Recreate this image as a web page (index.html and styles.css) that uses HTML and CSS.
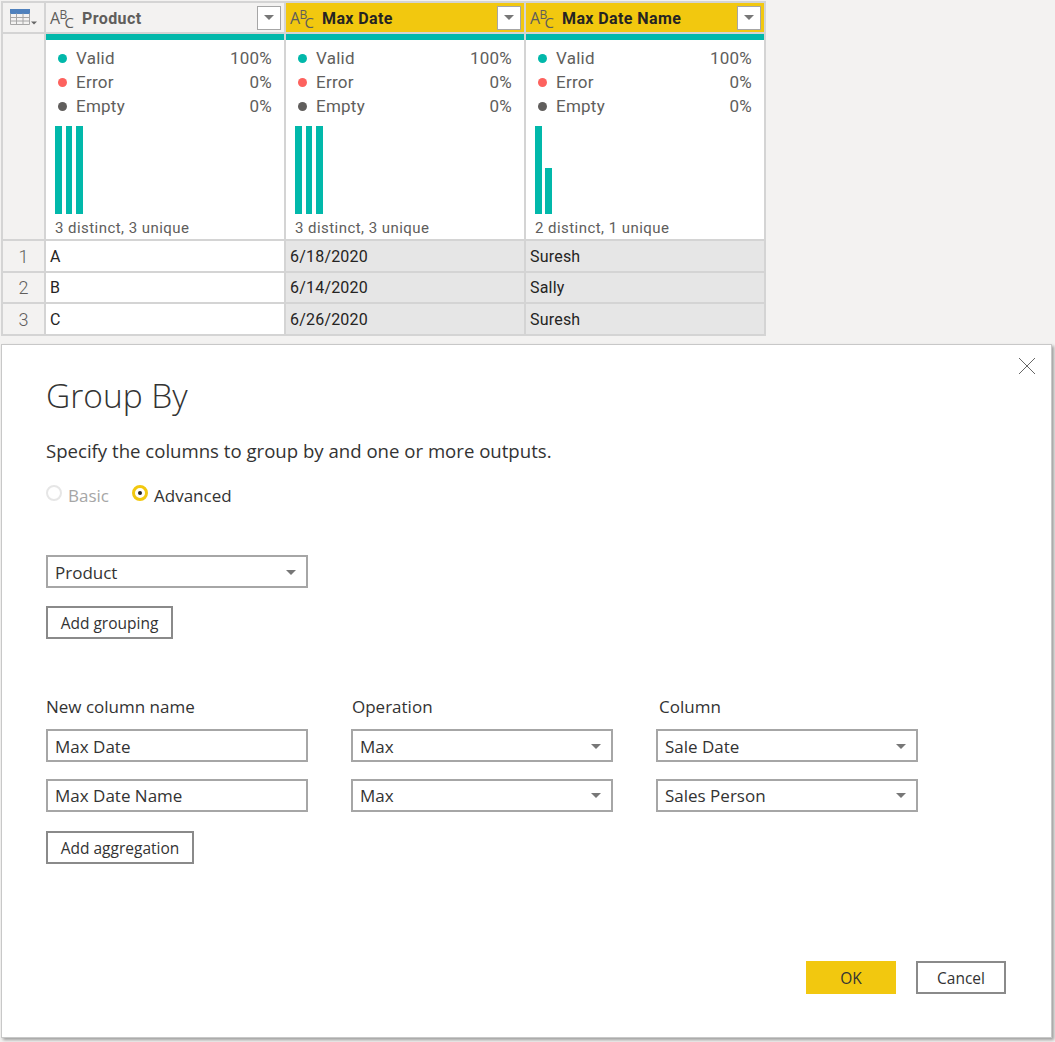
FILE: index.html
```html
<!DOCTYPE html>
<html lang="en">
<head>
<meta charset="utf-8">
<title>Group By</title>
<link rel="stylesheet" href="styles.css">
</head>
<body>
<div class="table">
  <div class="corner">
    <svg class="table-icon" width="28" height="18" viewBox="0 0 28 18"><rect x="0.5" y="0.5" width="19" height="4" fill="#4f81bd" stroke="#4f81bd"/><path d="M0.5 4.5V15.5H19.5V4.5M0.5 8.5H19.5M0.5 12H19.5M6.5 4.5V15.5M13 4.5V15.5" fill="none" stroke="#a6a6a6"/><path d="M21 12.500H27L24 15.500Z" fill="#666"/></svg>
  </div>
  <div class="head"><span class="abc">A<sup>B</sup><sub>C</sub></span><span class="head-name">Product</span><span class="filter"><i class="arrow"></i></span></div>
  <div class="head head-on"><span class="abc">A<sup>B</sup><sub>C</sub></span><span class="head-name">Max Date</span><span class="filter"><i class="arrow"></i></span></div>
  <div class="head head-on"><span class="abc">A<sup>B</sup><sub>C</sub></span><span class="head-name">Max Date Name</span><span class="filter"><i class="arrow"></i></span></div>

  <div class="corner"></div>
  <div class="profile">
    <div class="stat"><i class="dot teal"></i><span class="stat-name">Valid</span><span>100%</span></div>
    <div class="stat"><i class="dot red"></i><span class="stat-name">Error</span><span>0%</span></div>
    <div class="stat"><i class="dot grey"></i><span class="stat-name">Empty</span><span>0%</span></div>
    <div class="bars"><i class="bar"></i><i class="bar"></i><i class="bar"></i></div>
    <div class="distinct">3 distinct, 3 unique</div>
  </div>
  <div class="profile">
    <div class="stat"><i class="dot teal"></i><span class="stat-name">Valid</span><span>100%</span></div>
    <div class="stat"><i class="dot red"></i><span class="stat-name">Error</span><span>0%</span></div>
    <div class="stat"><i class="dot grey"></i><span class="stat-name">Empty</span><span>0%</span></div>
    <div class="bars"><i class="bar"></i><i class="bar"></i><i class="bar"></i></div>
    <div class="distinct">3 distinct, 3 unique</div>
  </div>
  <div class="profile">
    <div class="stat"><i class="dot teal"></i><span class="stat-name">Valid</span><span>100%</span></div>
    <div class="stat"><i class="dot red"></i><span class="stat-name">Error</span><span>0%</span></div>
    <div class="stat"><i class="dot grey"></i><span class="stat-name">Empty</span><span>0%</span></div>
    <div class="bars"><i class="bar"></i><i class="bar bar-half"></i></div>
    <div class="distinct">2 distinct, 1 unique</div>
  </div>

  <div class="num">1</div><div class="cell">A</div><div class="cell cell-on">6/18/2020</div><div class="cell cell-on">Suresh</div>
  <div class="num">2</div><div class="cell">B</div><div class="cell cell-on">6/14/2020</div><div class="cell cell-on">Sally</div>
  <div class="num">3</div><div class="cell">C</div><div class="cell cell-on">6/26/2020</div><div class="cell cell-on">Suresh</div>
</div>

<div class="dialog">
  <svg class="close" width="18" height="18" viewBox="0 0 18 18"><path d="M1 1L17 17M17 1L1 17" stroke="#666" stroke-width="1" fill="none"/></svg>
  <h1 class="title">Group By</h1>
  <p class="desc">Specify the columns to group by and one or more outputs.</p>
  <div class="radios">
    <label class="radio radio-off"><i class="radio-mark"></i>Basic</label>
    <label class="radio radio-on"><i class="radio-mark"></i>Advanced</label>
  </div>
  <div class="select select-group">Product<i class="arrow"></i></div>
  <div class="btn btn-grouping">Add grouping</div>
  <div class="agg-grid agg-head">
    <div>New column name</div><div class="agg-op">Operation</div><div class="agg-col">Column</div>
  </div>
  <div class="agg-grid agg-row">
    <div class="select">Max Date</div>
    <div class="select">Max<i class="arrow"></i></div>
    <div class="select">Sale Date<i class="arrow"></i></div>
  </div>
  <div class="agg-grid agg-row agg-row-2">
    <div class="select">Max Date Name</div>
    <div class="select">Max<i class="arrow"></i></div>
    <div class="select">Sales Person<i class="arrow"></i></div>
  </div>
  <div class="btn btn-agg">Add aggregation</div>
  <div class="footer">
    <div class="btn btn-ok">OK</div>
    <div class="btn btn-cancel">Cancel</div>
  </div>
</div>
</body>
</html>
```
FILE: styles.css
```css
* { box-sizing: border-box; }
html, body { margin: 0; height: 100%; overflow: hidden; }
body { background: #f3f2f1; font-family: "Open Sans", "Liberation Sans", sans-serif; color: #333; }

.table {
  display: grid;
  grid-template-columns: 41px 238px 238px 238px;
  grid-template-rows: 29px 205px 30px 29px 30px;
  gap: 2px;
  padding: 2px;
  width: 765px;
  margin: 1px 0 0 1px;
  background: #d4d4d4;
  font-family: Roboto, "Noto Sans", sans-serif;
}
.corner { background: #f3f2f1; padding: 6px 0 0 7px; }
.table-icon { display: block; }
.head {
  background: #f3f2f1;
  display: flex;
  align-items: center;
  padding: 0 3px 0 4px;
  color: #605e5c;
}
.head-on { background: #f2c80f; color: #252423; }
.abc {
  font-family: "Open Sans", sans-serif;
  font-size: 16px;
  color: #605e5c;
  width: 32px;
  line-height: 20px;
  white-space: nowrap;
  letter-spacing: -0.7px;
}
.abc sup { font-size: 12px; line-height: 0; vertical-align: 5px; }
.abc sub { font-size: 15px; line-height: 0; vertical-align: -4px; margin-left: -2px; }
.head-name { flex: 1; font-size: 16px; font-weight: 700; letter-spacing: 0.4px; padding-top: 2px; }
.filter {
  width: 24px;
  height: 24px;
  background: #fff;
  border: 1px solid #a6a6a6;
  display: flex;
  align-items: center;
  justify-content: center;
}
.arrow {
  display: block;
  width: 0;
  height: 0;
  border-left: 5px solid transparent;
  border-right: 5px solid transparent;
  border-top: 5px solid #777;
}
.profile {
  background: #fff;
  border-top: 6px solid #01b8aa;
  padding: 6px 12px 0 9px;
  color: #605e5c;
}
.stat {
  display: flex;
  align-items: center;
  height: 24px;
  font-size: 17px;
  letter-spacing: 0.25px;
}
.dot { width: 9px; height: 9px; border-radius: 50%; margin: 0 9px 0 3px; }
.teal { background: #01b8aa; }
.red { background: #fd625e; }
.grey { background: #605e5c; }
.stat-name { flex: 1; }
.bars { display: flex; align-items: flex-end; gap: 4px; height: 88px; margin-top: 8px; }
.bar { width: 6.5px; height: 88px; background: #01b8aa; }
.bar-half { height: 46px; margin-left: -0.5px; }
.distinct { font-size: 15px; line-height: 18px; margin-top: 5px; letter-spacing: 0.45px; }
.num {
  background: #f3f2f1;
  color: #605e5c;
  font-size: 18px;
  display: flex;
  align-items: center;
  justify-content: center;
  font-weight: 300;
}
.cell {
  background: #fff;
  color: #252423;
  font-size: 16px;
  letter-spacing: 0.2px;
  display: flex;
  align-items: center;
  padding: 0 0 0 4px;
}
.cell-on { background: #e6e6e6; }

.dialog {
  position: relative;
  width: 1051px;
  height: 694px;
  margin: 8px 0 0 1px;
  background: #fff;
  border: 1px solid #c8c8c8;
  box-shadow: 2px 2px 3px rgba(0, 0, 0, 0.35);
  padding: 28px 45px 0 44px;
  font-size: 17px;
  color: #333;
}
.close { position: absolute; top: 12px; right: 15px; }
.title { margin: 0; font-size: 33.5px; font-weight: 300; line-height: 44px; color: #333; }
.desc { margin: 22px 0 0; font-size: 18.6px; line-height: 24px; }
.radios { display: flex; gap: 23px; margin-top: 20px; height: 24px; }
.radio { display: flex; align-items: center; gap: 6px; font-size: 17px; }
.radio-off { color: #a6a6a6; width: 63px; }
.radio-mark { width: 16px; height: 16px; border-radius: 50%; display: block; margin-top: -4px; }
.radio-off .radio-mark { border: 2px solid #e6e6e6; }
.radio-on .radio-mark { border: 3px solid #f2c80f; background: #fff; position: relative; }
.radio-on .radio-mark::after {
  content: "";
  position: absolute;
  top: 3px;
  left: 3px;
  width: 4px;
  height: 4px;
  border-radius: 50%;
  background: #252423;
}
.select {
  width: 262px;
  height: 33px;
  border: 2px solid #a6a6a6;
  background: #fff;
  display: flex;
  align-items: center;
  justify-content: space-between;
  padding: 1px 10px 0 7px;
  font-size: 17px;
  color: #333;
}
.select-group { margin-top: 48px; }
.btn {
  height: 33px;
  border: 2px solid #8a8a8a;
  display: flex;
  align-items: center;
  justify-content: center;
  font-size: 15.5px;
  color: #333;
}
.btn-grouping { width: 127px; margin-top: 18px; }
.agg-grid { display: grid; grid-template-columns: 262px 262px 262px; column-gap: 43px; }
.agg-head { margin-top: 57px; line-height: 22px; font-size: 17px; }
.agg-op { padding-left: 1px; }
.agg-col { padding-left: 3px; }
.agg-row { margin-top: 11px; }
.agg-row-2 { margin-top: 17px; }
.agg-row-2 .select { padding-top: 0; }
.btn-agg { width: 148px; margin-top: 19px; }
.footer { display: flex; justify-content: flex-end; gap: 20px; margin-top: 97px; }
.btn-ok { width: 90px; background: #f2c80f; border-color: #f2c80f; }
.btn-cancel { width: 90px; }
```
